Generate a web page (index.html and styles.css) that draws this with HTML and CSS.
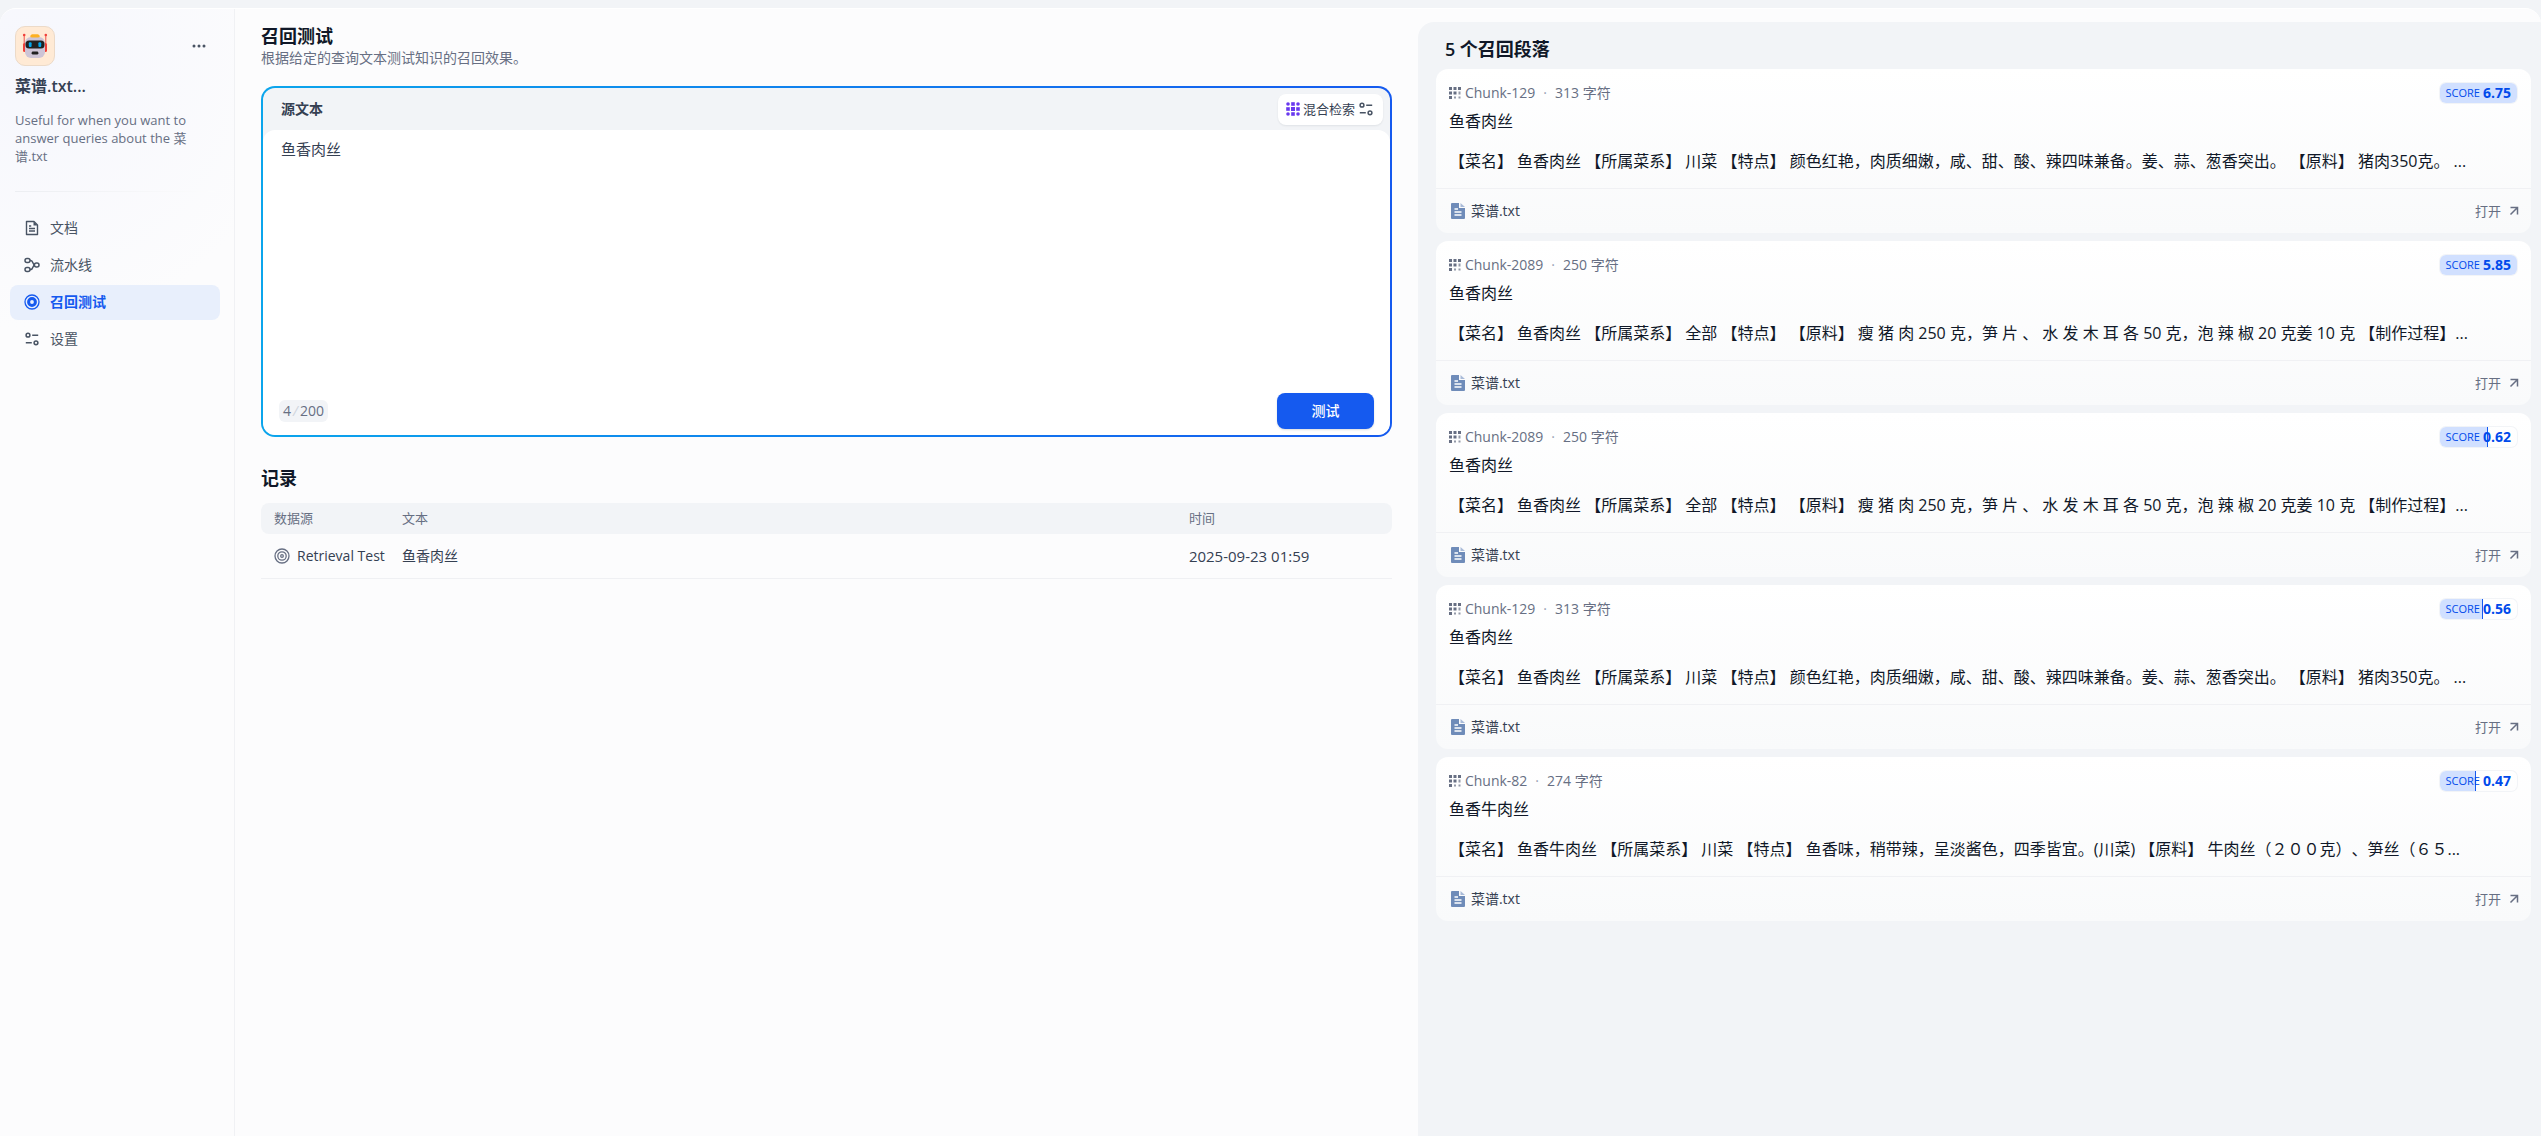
FILE: index.html
```html
<!DOCTYPE html>
<html lang="zh-CN">
<head>
    <meta charset="UTF-8">
    <meta name="viewport" content="width=device-width, initial-scale=1.0">
    <title>召回测试</title>
    <link rel="stylesheet" href="styles.css">
</head>
<body>
    <svg class="sprite" aria-hidden="true">
        <symbol id="icon-doc" viewBox="0 0 16 16">
            <path d="M10 1.5H2.5v13h11V5z" fill="none" stroke="currentColor" stroke-width="1.4" stroke-linejoin="round"/>
            <path d="M9.5 1.5v4h4z" fill="currentColor"/>
            <path d="M5 6h2.2M5 8.5h6M5 11h6" stroke="currentColor" stroke-width="1.3"/>
        </symbol>
        <symbol id="icon-pipeline" viewBox="0 0 16 16">
            <g fill="none" stroke="currentColor" stroke-width="1.5">
                <rect x="1" y="1.6" width="5" height="4" rx="2"/>
                <rect x="1" y="10.4" width="5" height="4" rx="2"/>
                <rect x="10.4" y="6" width="4.6" height="4" rx="2"/>
                <path d="M6 3.6h.8c2.6 0 1.6 4.4 4 4.4M6 12.4h.8c2.6 0 1.6-4.4 4-4.4"/>
            </g>
        </symbol>
        <symbol id="icon-target" viewBox="0 0 16 16">
            <g fill="none" stroke="currentColor" stroke-width="1.3">
                <circle cx="8" cy="8" r="7"/>
                <circle cx="8" cy="8" r="4.2"/>
                <circle cx="8" cy="8" r="1.3"/>
            </g>
        </symbol>
        <symbol id="icon-target-fill" viewBox="0 0 16 16">
            <circle cx="8" cy="8" r="7" fill="none" stroke="currentColor" stroke-width="1.3"/>
            <circle cx="8" cy="8" r="3.4" fill="none" stroke="currentColor" stroke-width="3"/>
        </symbol>
        <symbol id="icon-settings" viewBox="0 0 16 16">
            <g fill="none" stroke="currentColor" stroke-width="1.5">
                <circle cx="4" cy="4.2" r="1.9"/>
                <path d="M8.2 4.2h6M1.8 11.8h6"/>
                <circle cx="12" cy="11.8" r="1.9"/>
            </g>
        </symbol>
        <symbol id="icon-chunk" viewBox="0 0 12 12">
            <path d="M0 0h3v3H0zM4.5 0h3v3h-3zM9 0h3v3H9zM0 4.5h3v3H0zM4.5 4.5h3v3h-3zM0 9h3v3H0z" fill="currentColor"/>
            <path d="M9.5 4.5h2v3h-2zM5 9.5h2v2H5zM9.5 9.5h2v2h-2z" fill="currentColor" opacity=".7"/>
        </symbol>
        <symbol id="icon-grid" viewBox="0 0 14 14">
            <g fill="currentColor">
                <path d="M5 5h4v4H5z"/>
                <circle cx="2" cy="2" r="1.8"/><rect x="5.2" y=".2" width="3.6" height="3.6"/><circle cx="12" cy="2" r="1.8"/>
                <rect x=".2" y="5.2" width="3.6" height="3.6"/><rect x="10.2" y="5.2" width="3.6" height="3.6"/>
                <circle cx="2" cy="12" r="1.8"/><rect x="5.2" y="10.2" width="3.6" height="3.6"/><circle cx="12" cy="12" r="1.8"/>
            </g>
        </symbol>
        <symbol id="icon-file" viewBox="0 0 14 16">
            <path d="M0 1a1 1 0 0 1 1-1h7v5h6v10a1 1 0 0 1-1 1H1a1 1 0 0 1-1-1z" fill="#6f8cb9"/>
            <path d="M9.5 0L14 4H9.5z" fill="#a9bbd8"/>
            <path d="M3.5 6H7M3.5 9h7M3.5 12h7" stroke="#fff" stroke-width="1.3"/>
        </symbol>
        <symbol id="icon-arrow" viewBox="0 0 10 10">
            <path d="M1.5 1.5h7v7M8.5 1.5l-7 7" fill="none" stroke="currentColor" stroke-width="1.5"/>
        </symbol>
    </svg>

    <div class="page">
        <aside class="sidebar">
            <div class="sidebar-top">
                <div class="app-icon">
                    <svg width="26" height="26" viewBox="0 0 26 26" aria-hidden="true">
                        <path d="M2.2 2v9M23.8 2v9" stroke="#f0504a" stroke-width="1"/>
                        <circle cx="2.2" cy="2" r="1.3" fill="#f0403a"/>
                        <circle cx="23.8" cy="2" r="1.3" fill="#f0403a"/>
                        <rect x="1" y="10" width="3" height="9" rx="1.5" fill="#f0403a"/>
                        <rect x="22" y="10" width="3" height="9" rx="1.5" fill="#f0403a"/>
                        <rect x="8.5" y="1.5" width="9" height="5" rx="2" fill="#fdb022"/>
                        <rect x="3" y="4" width="20" height="21" rx="6" fill="#cdc4d6"/>
                        <rect x="8.5" y="1.5" width="9" height="3" rx="1.5" fill="#fdb022"/>
                        <rect x="3.5" y="7.5" width="19" height="8" rx="3.5" fill="#212121"/>
                        <rect x="6.8" y="9.3" width="2.8" height="4.6" rx="1" fill="#00a6ed"/>
                        <rect x="16.4" y="9.3" width="2.8" height="4.6" rx="1" fill="#00a6ed"/>
                        <rect x="9.6" y="18.6" width="6.8" height="3" rx="1.4" fill="#212121"/>
                    </svg>
                </div>
                <button class="more-button" aria-label="更多">
                    <svg width="14" height="4" viewBox="0 0 14 4"><circle cx="2" cy="2" r="1.5"/><circle cx="7" cy="2" r="1.5"/><circle cx="12" cy="2" r="1.5"/></svg>
                </button>
            </div>
            <div class="app-name">菜谱.txt...</div>
            <p class="app-desc">Useful for when you want to answer queries about the 菜谱.txt</p>
            <hr class="divider">
            <nav class="nav">
                <a href="#"><svg class="icon"><use href="#icon-doc"/></svg>文档</a>
                <a href="#"><svg class="icon"><use href="#icon-pipeline"/></svg>流水线</a>
                <a href="#" class="active"><svg class="icon"><use href="#icon-target-fill"/></svg>召回测试</a>
                <a href="#"><svg class="icon"><use href="#icon-settings"/></svg>设置</a>
            </nav>
        </aside>

        <main class="testing">
            <h1>召回测试</h1>
            <p class="subtitle">根据给定的查询文本测试知识的召回效果。</p>

            <form class="query-box">
                <div class="query-inner">
                    <div class="query-header">
                        <label for="query">源文本</label>
                        <button type="button" class="method-button">
                            <svg class="icon-method"><use href="#icon-grid"/></svg>
                            混合检索
                            <svg class="icon-small"><use href="#icon-settings"/></svg>
                        </button>
                    </div>
                    <div class="query-body">
                        <textarea id="query" maxlength="200" spellcheck="false">鱼香肉丝</textarea>
                        <div class="query-footer">
                            <span class="counter">4<i>/</i>200</span>
                            <button type="button" class="test-button">测试</button>
                        </div>
                    </div>
                </div>
            </form>

            <h2>记录</h2>
            <table class="records">
                <thead>
                    <tr>
                        <th class="col-source">数据源</th>
                        <th>文本</th>
                        <th class="col-time">时间</th>
                    </tr>
                </thead>
                <tbody>
                    <tr>
                        <td><span class="source"><svg class="icon"><use href="#icon-target"/></svg>Retrieval Test</span></td>
                        <td>鱼香肉丝</td>
                        <td class="time">2025-09-23 01:59</td>
                    </tr>
                </tbody>
            </table>
        </main>

        <section class="results">
            <h2>5 个召回段落</h2>

            <article class="card">
                <div class="card-main">
                    <div class="meta">
                        <svg class="icon-chunk"><use href="#icon-chunk"/></svg>
                        <span>Chunk-129</span><span class="dot">·</span><span>313 字符</span>
                        <div class="score full"><div class="score-fill" style="width: 100%"></div><span>SCORE</span><b>6.75</b></div>
                    </div>
                    <h3>鱼香肉丝</h3>
                    <p>【菜名】 鱼香肉丝 【所属菜系】 川菜 【特点】 颜色红艳，肉质细嫩，咸、甜、酸、辣四味兼备。姜、蒜、葱香突出。 【原料】 猪肉350克。 ...</p>
                </div>
                <div class="card-footer">
                    <svg class="icon-file"><use href="#icon-file"/></svg>
                    <span>菜谱.txt</span>
                    <a href="#">打开<svg class="icon-arrow"><use href="#icon-arrow"/></svg></a>
                </div>
            </article>

            <article class="card">
                <div class="card-main">
                    <div class="meta">
                        <svg class="icon-chunk"><use href="#icon-chunk"/></svg>
                        <span>Chunk-2089</span><span class="dot">·</span><span>250 字符</span>
                        <div class="score full"><div class="score-fill" style="width: 100%"></div><span>SCORE</span><b>5.85</b></div>
                    </div>
                    <h3>鱼香肉丝</h3>
                    <p>【菜名】 鱼香肉丝 【所属菜系】 全部 【特点】 【原料】 瘦 猪 肉 250 克，笋 片 、 水 发 木 耳 各 50 克，泡 辣 椒 20 克姜 10 克 【制作过程】...</p>
                </div>
                <div class="card-footer">
                    <svg class="icon-file"><use href="#icon-file"/></svg>
                    <span>菜谱.txt</span>
                    <a href="#">打开<svg class="icon-arrow"><use href="#icon-arrow"/></svg></a>
                </div>
            </article>

            <article class="card">
                <div class="card-main">
                    <div class="meta">
                        <svg class="icon-chunk"><use href="#icon-chunk"/></svg>
                        <span>Chunk-2089</span><span class="dot">·</span><span>250 字符</span>
                        <div class="score"><div class="score-fill" style="width: 62%"></div><span>SCORE</span><b>0.62</b></div>
                    </div>
                    <h3>鱼香肉丝</h3>
                    <p>【菜名】 鱼香肉丝 【所属菜系】 全部 【特点】 【原料】 瘦 猪 肉 250 克，笋 片 、 水 发 木 耳 各 50 克，泡 辣 椒 20 克姜 10 克 【制作过程】...</p>
                </div>
                <div class="card-footer">
                    <svg class="icon-file"><use href="#icon-file"/></svg>
                    <span>菜谱.txt</span>
                    <a href="#">打开<svg class="icon-arrow"><use href="#icon-arrow"/></svg></a>
                </div>
            </article>

            <article class="card">
                <div class="card-main">
                    <div class="meta">
                        <svg class="icon-chunk"><use href="#icon-chunk"/></svg>
                        <span>Chunk-129</span><span class="dot">·</span><span>313 字符</span>
                        <div class="score"><div class="score-fill" style="width: 56%"></div><span>SCORE</span><b>0.56</b></div>
                    </div>
                    <h3>鱼香肉丝</h3>
                    <p>【菜名】 鱼香肉丝 【所属菜系】 川菜 【特点】 颜色红艳，肉质细嫩，咸、甜、酸、辣四味兼备。姜、蒜、葱香突出。 【原料】 猪肉350克。 ...</p>
                </div>
                <div class="card-footer">
                    <svg class="icon-file"><use href="#icon-file"/></svg>
                    <span>菜谱.txt</span>
                    <a href="#">打开<svg class="icon-arrow"><use href="#icon-arrow"/></svg></a>
                </div>
            </article>

            <article class="card">
                <div class="card-main">
                    <div class="meta">
                        <svg class="icon-chunk"><use href="#icon-chunk"/></svg>
                        <span>Chunk-82</span><span class="dot">·</span><span>274 字符</span>
                        <div class="score"><div class="score-fill" style="width: 47%"></div><span>SCORE</span><b>0.47</b></div>
                    </div>
                    <h3>鱼香牛肉丝</h3>
                    <p>【菜名】 鱼香牛肉丝 【所属菜系】 川菜 【特点】 鱼香味，稍带辣，呈淡酱色，四季皆宜。(川菜) 【原料】 牛肉丝（２００克）、笋丝（６５...</p>
                </div>
                <div class="card-footer">
                    <svg class="icon-file"><use href="#icon-file"/></svg>
                    <span>菜谱.txt</span>
                    <a href="#">打开<svg class="icon-arrow"><use href="#icon-arrow"/></svg></a>
                </div>
            </article>
        </section>
    </div>
</body>
</html>
```

FILE: styles.css
```css
* {
    box-sizing: border-box;
}
body {
    margin: 0;
    padding-top: 8px;
    min-height: 100vh;
    display: flex;
    background-color: #f2f4f7;
    font-family: "Open Sans", "Noto Sans CJK SC", sans-serif;
    font-size: 14px;
    line-height: 20px;
    color: #354052;
    text-spacing-trim: space-all;
}
h1, h2, h3, p {
    margin: 0;
}
button, textarea {
    font: inherit;
    color: inherit;
    border: none;
}
button {
    cursor: pointer;
}
a {
    color: inherit;
    text-decoration: none;
}
svg {
    flex-shrink: 0;
}
.sprite {
    display: none;
}
.icon {
    width: 16px;
    height: 16px;
}
.page {
    flex: 1;
    display: flex;
    background-color: #fcfcfd;
    border-top: 1px solid white;
    border-radius: 16px 16px 0 0;
    overflow: hidden;
}

/* sidebar */
.sidebar {
    width: 235px;
    flex-shrink: 0;
    padding: 17px 14px 0 10px;
    border-right: 1px solid #f0f1f4;
    background: radial-gradient(circle at 30px 50px, #f6f7fd, #fcfcfd 270px);
}
.sidebar-top {
    display: flex;
    justify-content: space-between;
    align-items: center;
    padding: 0 10px 0 5px;
}
.app-icon {
    width: 40px;
    height: 40px;
    display: flex;
    align-items: center;
    justify-content: center;
    background-color: #ffead5;
    border: 1px solid #ecdac8;
    border-radius: 10px;
}
.more-button {
    display: flex;
    padding: 8px 4px;
    background: none;
    fill: #495464;
}
.app-name {
    margin: 9px 5px 0;
    font-size: 16px;
    font-weight: 600;
    line-height: 22px;
}
.app-desc {
    margin: 14px 5px 0;
    font-size: 13px;
    line-height: 18px;
    color: #676f83;
}
.divider {
    height: 1px;
    margin: 26px 5px 0;
    border: none;
    background: linear-gradient(to right, #eceef2, #fcfcfd);
}
.nav {
    display: flex;
    flex-direction: column;
    gap: 2px;
    margin-top: 19px;
}
.nav a {
    display: flex;
    align-items: center;
    gap: 10px;
    height: 35px;
    padding: 0 14px 2px;
    border-radius: 8px;
    color: #495464;
}
.nav a.active {
    background-color: #e8effc;
    color: #155aef;
    font-weight: 600;
}

/* query */
.testing {
    flex: 1;
    min-width: 0;
    padding: 15px 26px 0;
}
h1, h2 {
    font-size: 18px;
    font-weight: 600;
    line-height: 24px;
    color: #101828;
}
.subtitle {
    color: #676f83;
}
.query-box {
    margin-top: 18px;
    padding: 2px;
    border-radius: 14px;
    background: linear-gradient(to right, #0ba5ec, #155aef);
}
.query-inner {
    border-radius: 12px;
    background-color: #f2f4f7;
    overflow: hidden;
}
.query-header {
    display: flex;
    justify-content: space-between;
    align-items: center;
    height: 42px;
    padding: 0 7px 0 18px;
    font-weight: 600;
}
.method-button {
    display: flex;
    align-items: center;
    gap: 3px;
    height: 31px;
    padding: 0 9px 0 8px;
    border-radius: 8px;
    background-color: white;
    box-shadow: 0 1px 2px rgba(16, 24, 40, 0.08);
    font-size: 13px;
    font-weight: 400;
}
.icon-method {
    width: 14px;
    height: 14px;
    color: #6938ef;
}
.icon-small {
    width: 16px;
    height: 16px;
    color: #495464;
}
.query-body {
    border-radius: 12px;
    background-color: white;
}
textarea {
    display: block;
    width: 100%;
    height: 263px;
    padding: 8px 18px;
    font-size: 15px;
    line-height: 22px;
    resize: none;
    outline: none;
    background: none;
}
.query-footer {
    display: flex;
    justify-content: space-between;
    align-items: center;
    padding: 0 16px 6px;
}
.counter {
    padding: 1px 4px;
    border-radius: 6px;
    background-color: #f2f4f7;
    color: #676f83;
}
.counter i {
    margin: 0 2px;
    color: #d0d5dd;
}
.test-button {
    width: 97px;
    height: 36px;
    border-radius: 8px;
    background-color: #155aef;
    box-shadow: 0 1px 2px rgba(16, 24, 40, 0.15);
    color: white;
    font-weight: 500;
}

/* records */
.testing h2 {
    margin-top: 29px;
}
.records {
    width: 100%;
    margin-top: 13px;
    border-spacing: 0;
    table-layout: fixed;
}
.records th {
    height: 31px;
    padding: 0 13px 2px;
    background-color: #f2f4f7;
    font-size: 13px;
    font-weight: 400;
    text-align: left;
    color: #676f83;
}
.records th:first-child {
    border-radius: 8px 0 0 8px;
}
.records th:last-child {
    border-radius: 0 8px 8px 0;
}
.records td {
    height: 45px;
    padding: 0 0 1px 13px;
    border-bottom: 1px solid #eff0f3;
}
.records .time {
    font-size: 15px;
}
.col-source {
    width: 128px;
}
.col-time {
    width: 216px;
}
.source {
    display: flex;
    align-items: center;
    gap: 7px;
    white-space: nowrap;
}
.source .icon {
    color: #676f83;
}

/* results */
.results {
    flex: 0 0 44.2%;
    display: flex;
    flex-direction: column;
    gap: 8px;
    min-width: 0;
    margin-top: 13px;
    padding: 15px 10px 0 18px;
    border-radius: 16px 0 0 0;
    background-color: #f2f4f7;
}
.results h2 {
    padding: 0 9px;
}
.card {
    border-radius: 12px;
    background: linear-gradient(to bottom, white, #f9fafb);
    overflow: hidden;
}
.card-main {
    padding: 14px 14px 15px 13px;
}
.meta {
    display: flex;
    align-items: center;
    color: #676f83;
}
.icon-chunk {
    width: 12px;
    height: 12px;
    margin-right: 4px;
}
.dot {
    margin: 0 8px;
    color: #98a2b2;
}
.score {
    position: relative;
    display: flex;
    align-items: center;
    gap: 3px;
    height: 20px;
    margin-left: auto;
    padding: 0 6px;
    border-radius: 6px;
    box-shadow: 0 0 0 1px #f2f4f7;
    overflow: hidden;
    font-size: 11px;
    color: #004aeb;
}
.score-fill {
    position: absolute;
    top: 0;
    bottom: 0;
    left: 0;
    border-right: 1px solid #155aef;
    background-color: #d1e0ff;
}
.score.full .score-fill {
    border-right: none;
}
.score span, .score b {
    position: relative;
}
.score b {
    font-size: 14px;
}
.card h3 {
    margin-top: 6px;
    font-size: 16px;
    font-weight: 400;
    line-height: 24px;
    color: #101828;
}
.card p {
    margin-top: 16px;
    font-size: 16px;
    line-height: 24px;
    white-space: nowrap;
    color: #101828;
}
.card-footer {
    display: flex;
    align-items: center;
    gap: 6px;
    height: 45px;
    padding: 0 12px 0 15px;
    border-top: 1px solid #f0f1f4;
}
.icon-file {
    width: 14px;
    height: 16px;
}
.card-footer a {
    display: flex;
    align-items: center;
    gap: 8px;
    margin-left: auto;
    font-size: 13px;
    color: #676f83;
}
.icon-arrow {
    width: 10px;
    height: 10px;
}
```
